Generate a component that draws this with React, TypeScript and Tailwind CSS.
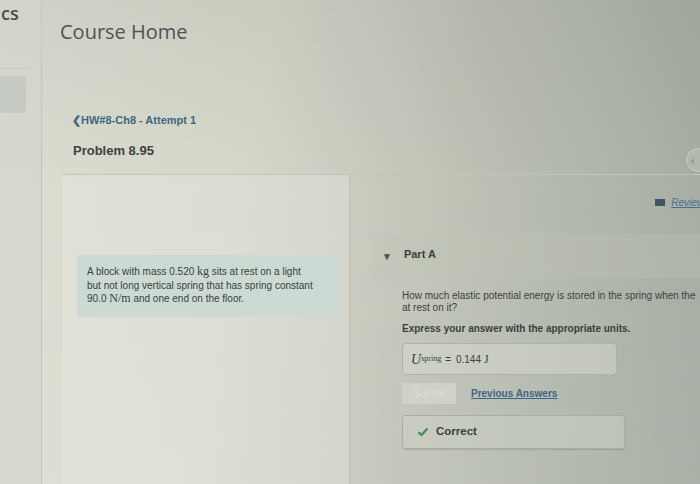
import React from "react";

export default function App() {
  return (
    <div
      className="relative flex w-[700px] h-[484px] overflow-hidden bg-[linear-gradient(180deg,rgba(0,0,0,0.06)_0%,rgba(0,0,0,0)_40%,rgba(255,255,255,0.08)_100%),linear-gradient(100deg,#dedfd3_0%,#d6d8cb_35%,#bfc3b6_62%,#a3a99f_100%)] text-[#3b3f3d]"
      style={{ fontFamily: '"Liberation Sans", Arial, sans-serif' }}
    >
      {/* sidebar */}
      <div className="w-[42px] shrink-0 border-r border-[#c3c6bc] bg-[#d3d6cc]/60 flex flex-col">
        <div
          className="pt-[2px] pl-[1px] text-[18px] leading-[22px] font-semibold text-[#4a4e4c]"
          style={{ fontFamily: '"Open Sans", sans-serif' }}
        >
          cs
        </div>
        <div className="mt-[44px] h-px w-[30px] bg-[#c6c9c0]" />
        <div className="mt-[7px] h-[37px] w-[26px] bg-[#c6cbc4]" />
      </div>

      {/* main */}
      <div className="flex-1 flex flex-col min-w-0">
        <div
          className="pl-[18px] pt-[18px] text-[20px] leading-[28px] text-[#4f5352]"
          style={{ fontFamily: '"Open Sans", sans-serif' }}
        >
          Course Home
        </div>

        <div className="pl-[30px] mt-[67px] text-[11px] leading-[14px] font-bold text-[#3f6780]">
          &#10094;HW#8-Ch8 - Attempt 1
        </div>
        <div className="pl-[31px] mt-[15px] text-[13px] leading-[17px] font-bold text-[#3e4240]">
          Problem 8.95
        </div>

        <div className="ml-[20px] mt-[15px] flex flex-1 border-t border-[#c2c5ba]">
          {/* left column */}
          <div className="w-[288px] shrink-0 border-r border-[#bfc2b8] bg-[#e6e6de]/40 pl-[15px] pt-[80px]">
            <div className="w-[261px] h-[62px] bg-[#ccdad4] pl-[10px] pt-[10px] text-[10px] leading-[13.5px] text-[#3c403e]">
              A block with mass 0.520{" "}
              <span style={{ fontFamily: '"Liberation Serif", serif' }} className="text-[12px]">
                kg
              </span>{" "}
              sits at rest on a light
              <br />
              but not long vertical spring that has spring constant
              <br />
              90.0{" "}
              <span style={{ fontFamily: '"Liberation Serif", serif' }} className="text-[12px]">
                N/m
              </span>{" "}
              and one end on the floor.
            </div>
          </div>

          {/* right column */}
          <div className="flex-1 flex flex-col min-w-0">
            <div className="flex items-center justify-end pt-[24px] h-[59px]">
              <div className="flex items-center gap-[6px] -mr-[4px] mb-[28px]">
                <div className="w-[10px] h-[7px] bg-[#3f5466]" />
                <span className="text-[10px] italic underline text-[#4d7090]">Review</span>
              </div>
            </div>

            <div className="ml-[20px] h-[44px] bg-[#bfc2b6]/30 flex items-center">
              <span className="ml-[12px] text-[10px] text-[#4a4e4c]">&#9660;</span>
              <span className="ml-[12px] mb-[3px] text-[11px] font-bold text-[#3b3f3d]">Part A</span>
            </div>

            <div className="pl-[52px] pt-[12px]">
              <div className="text-[10px] leading-[12px] whitespace-nowrap text-[#3e4240]">
                How much elastic potential energy is stored in the spring when the
                <br />
                at rest on it?
              </div>
              <div className="mt-[9px] text-[10px] leading-[12px] font-bold text-[#3b3f3d]">
                Express your answer with the appropriate units.
              </div>

              <div className="mt-[8px] w-[215px] h-[32px] rounded-[4px] border border-[#aeb2a8] bg-[#dfe1d8]/40 flex items-center pl-[8px]">
                <span
                  className="italic text-[14px] text-[#3b3f3d]"
                  style={{ fontFamily: '"Liberation Serif", serif' }}
                >
                  U
                </span>
                <span
                  className="text-[8px] self-end mb-[9px] text-[#3b3f3d]"
                  style={{ fontFamily: '"Liberation Serif", serif' }}
                >
                  spring
                </span>
                <span className="ml-[4px] text-[10px] text-[#3b3f3d]">=</span>
                <span className="ml-[5px] text-[10px] text-[#3b3f3d]">0.144</span>
                <span
                  className="ml-[3px] text-[12px] text-[#3b3f3d]"
                  style={{ fontFamily: '"Liberation Serif", serif' }}
                >
                  J
                </span>
              </div>

              <div className="mt-[8px] flex items-center">
                <div className="w-[54px] h-[21px] bg-[#cfd2c9] flex items-center justify-center text-[10px] text-[#dcded6]">
                  Submit
                </div>
                <span className="ml-[15px] text-[10px] font-bold underline text-[#3e6585]">
                  Previous Answers
                </span>
              </div>

              <div className="mt-[11px] w-[223px] h-[34px] rounded-[3px] border border-[#a9ada3] bg-[#d3d6cb]/40 flex items-center pl-[14px] shadow-[0_1px_1px_rgba(0,0,0,0.12)]">
                <svg width="12" height="10" viewBox="0 0 12 10">
                  <path d="M1.5 5.2 L4.5 8 L10.5 1.5" fill="none" stroke="#3f8a55" strokeWidth="2.2" />
                </svg>
                <span className="ml-[7px] text-[11.5px] font-bold text-[#3b3f3d]">Correct</span>
              </div>
            </div>
          </div>
        </div>
      </div>

      {/* circle button at right edge */}
      <div className="absolute left-[686px] top-[148px] w-[24px] h-[24px] rounded-full border border-[#c8ccc3] bg-[#b2b8ae] flex items-center pl-[4px] text-[10px] text-[#6b716c]">
        &#8249;
      </div>
    </div>
  );
}
